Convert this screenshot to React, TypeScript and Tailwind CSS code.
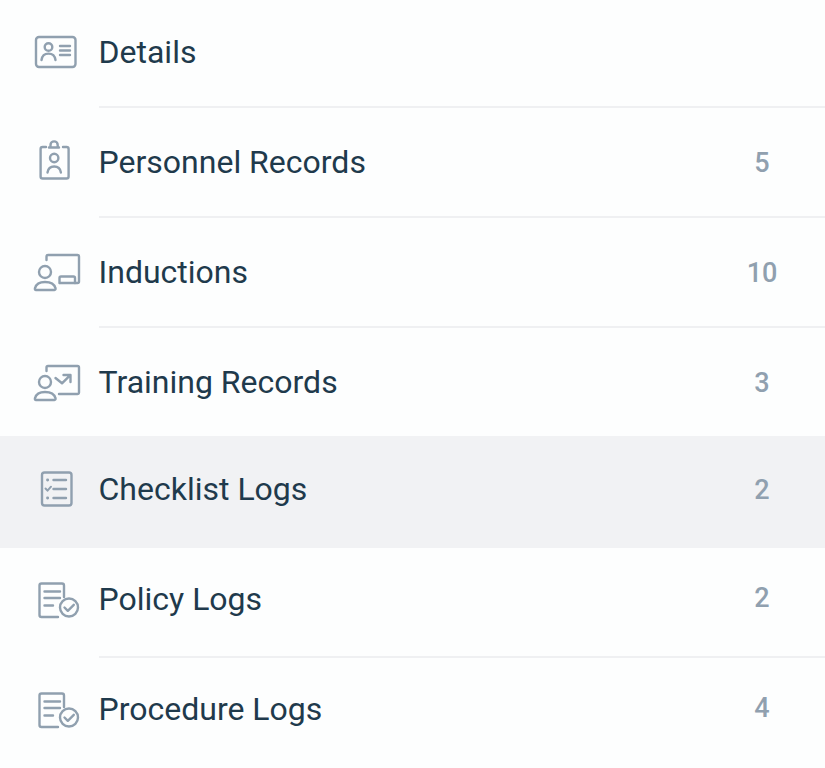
const stroke = { fill: 'none', stroke: '#90a0af', strokeWidth: 2.4, strokeLinecap: 'round' as const, strokeLinejoin: 'round' as const };

function Icon({ cy, children, className }: { cy: number; children: React.ReactNode; className: string }) {
  // coordinates inside are page coordinates, so the box is just a window on them
  return (
    <svg width={60} height={60} viewBox={`27 ${cy - 30} 60 60`} className={`ml-[27px] mr-[11.5px] shrink-0 ${className}`} {...stroke}>
      {children}
    </svg>
  );
}

const DetailsIcon = () => (
  <Icon cy={52} className="mb-[4px]">
    <rect x={36} y={37} width={39.5} height={30} rx={3} />
    <circle cx={48.5} cy={47} r={3.8} />
    <path d="M41.5 60c.6-4.2 3.4-6.4 7-6.4s6.4 2.2 7 6.4" />
    <path d="M60 46h10M60 50.5h10M60 55h10" />
  </Icon>
);

const PersonnelIcon = () => (
  <Icon cy={162} className="mb-[2px]">
    <path d="M46 147h-3.4a2 2 0 0 0-2 2v27.5a2 2 0 0 0 2 2h24a2 2 0 0 0 2-2V149a2 2 0 0 0-2-2H63" />
    <path d="M49 147.5h10M50.5 147v-2a3.6 3.6 0 0 1 7.2 0v2" />
    <circle cx={54.2} cy={158} r={4.2} />
    <path d="M47.5 172.5c.6-4 3.2-6 6.7-6s6.1 2 6.7 6" />
  </Icon>
);

const InductionsIcon = () => (
  <Icon cy={272} className="mb-[2px]">
    <path d="M46.5 260v-3.5a1.5 1.5 0 0 1 1.5-1.5h29.5a1.5 1.5 0 0 1 1.5 1.5v25a1.5 1.5 0 0 1-1.500 1.500H60" />
    <path d="M59.5 283v-5a1.5 1.5 0 0 1 1.5-1.500h12.500a1.500 1.500 0 0 1 1.500 1.500v5" />
    <circle cx={45} cy={272} r={6} />
    <path d="M36 290c-1 0-1.300-.8-1-1.800 1-3.800 4.500-6.200 10-6.200s9.500 2.400 10.500 6.200c.3 1-.2 1.800-1 1.800z" />
  </Icon>
);

const TrainingIcon = () => (
  <Icon cy={382} className="">
    <path d="M46.5 371v-3.500a1.500 1.500 0 0 1 1.500-1.500h29.500a1.500 1.500 0 0 1 1.500 1.500v25a1.500 1.500 0 0 1-1.500 1.500H59" />
    <path d="M55.500 378l6.500 5.300 8-8M63.500 375H70.500v7" />
    <circle cx={45} cy={382} r={6} />
    <path d="M36 400c-1 0-1.300-.8-1-1.800 1-3.800 4.500-6.200 10-6.200s9.500 2.400 10.500 6.200c.3 1-.2 1.800-1 1.800z" />
  </Icon>
);

const ChecklistIcon = () => (
  <Icon cy={489} className="mb-[6px]">
    <rect x={42} y={472.5} width={29.5} height={33} rx={2.5} />
    <path d="M53.500 480h12.500M53.500 489h12.500M53.500 498h12.500" />
    <path d="M47.500 480h.2M47.500 498h.2" strokeWidth={2.8} />
    <path d="M45.500 488.500l2 2.200 3.500-4" strokeWidth={2} />
  </Icon>
);

const LogIcon = ({ cy }: { cy: number }) => (
  <Icon cy={cy} className="mb-[8px]">
    <path d={`M58 ${cy + 18}H41.5a2 2 0 0 1-2-2V${cy - 13.5}a2 2 0 0 1 2-2h20.5a2 2 0 0 1 2 2V${cy - 2}`} />
    <path d={`M44.5 ${cy - 7.5}h15.5M44.5 ${cy - 1}h15.5M44.5 ${cy + 6.5}h8.5`} />
    <circle cx={69} cy={cy + 8.5} r={9} />
    <path d={`M64.5 ${cy + 8.5}l3.300 3.300 6-6`} />
  </Icon>
);

const rows = [
  { label: 'Details', icon: <DetailsIcon />, h: 'h-[108px]', line: true, text: 'mb-[2px]', num: '' },
  { label: 'Personnel Records', count: 5, icon: <PersonnelIcon />, h: 'h-[110px]', line: true, text: '', num: 'mt-[2px]' },
  { label: 'Inductions', count: 10, icon: <InductionsIcon />, h: 'h-[110px]', line: true, text: '', num: 'mt-[2px]' },
  { label: 'Training Records', count: 3, icon: <TrainingIcon />, h: 'h-[108px]', line: false, text: '', num: 'mt-[2px]' },
  { label: 'Checklist Logs', count: 2, icon: <ChecklistIcon />, h: 'h-[112px]', line: false, active: true, text: 'mb-[6px]', num: 'mb-[4px]' },
  { label: 'Policy Logs', count: 2, icon: <LogIcon cy={599} />, h: 'h-[110px]', line: true, text: 'mb-[6px]', num: 'mb-[8px]' },
  { label: 'Procedure Logs', count: 4, icon: <LogIcon cy={709} />, h: 'h-[110px]', line: false, text: 'mb-[8px]', num: 'mb-[10px]' },
];

export default function App() {
  return (
    <div className="w-[825px] h-[768px] overflow-hidden bg-[#fdfefe] font-['Roboto',sans-serif]">
      {rows.map(r => (
        <div key={r.label} className={`flex items-center ${r.h} ${r.active ? 'bg-[#f1f2f4]' : ''}`}>
          {r.icon}
          <div className={`flex flex-1 h-full items-center ${r.line ? 'border-b-2 border-[#eff0f2]' : ''}`}>
            <span className={`flex-1 text-[32px] leading-none text-[#1f3a4c] ${r.text}`}>{r.label}</span>
            {r.count !== undefined && (
              <span className={`w-[126px] text-center text-[27px] leading-none font-medium text-[#90a0af] ${r.num}`}>{r.count}</span>
            )}
          </div>
        </div>
      ))}
    </div>
  );
}
